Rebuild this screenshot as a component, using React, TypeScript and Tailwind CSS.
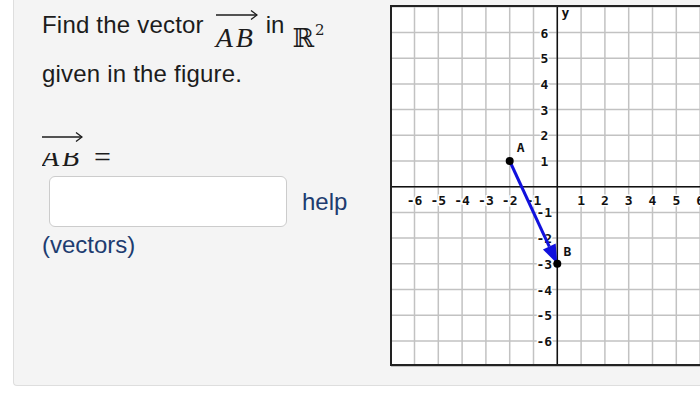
import React from "react";

const UX = 23.8;
const UY = 25.7;
const OX = 167.3;
const OY = 181.7;
const px = (x: number) => OX + x * UX;
const py = (y: number) => OY - y * UY;

function VecArrow({ width }: { width: number }) {
  return (
    <svg width={width} height={10} viewBox={`0 0 ${width} 10`} className="block">
      <line x1={0} y1={5} x2={width - 1} y2={5} stroke="#1c1c1c" strokeWidth={1.3} />
      <path d={`M${width - 7} 0.5 L${width - 1} 5 L${width - 7} 9.5`} fill="none" stroke="#1c1c1c" strokeWidth={1.3} />
    </svg>
  );
}

function Graph() {
  const ticks = [-6, -5, -4, -3, -2, -1, 1, 2, 3, 4, 5, 6];
  const A = { x: px(-2), y: py(1) };
  const B = { x: px(0), y: py(-3) };
  const dx = B.x - A.x;
  const dy = B.y - A.y;
  const len = Math.hypot(dx, dy);
  const ux = dx / len;
  const uy = dy / len;
  const hl = 19;
  const hw = 7;
  const bx = B.x - hl * ux;
  const by = B.y - hl * uy;
  const head = `${B.x},${B.y} ${bx + hw * uy},${by - hw * ux} ${bx - hw * uy},${by + hw * ux}`;
  const label = {
    fontFamily: '"DejaVu Sans Mono", monospace',
    fontWeight: 700,
    fontSize: 13,
  } as const;

  return (
    <svg width={312} height={362} viewBox="0 0 312 362" className="block">
      <rect x={1} y={1} width={340} height={359} fill="#ffffff" />
      {Array.from({ length: 15 }, (_, k) => k - 7).map((i) => (
        <line key={`v${i}`} x1={px(i)} y1={1} x2={px(i)} y2={360} stroke="#c2c2c2" strokeWidth={1.5} />
      ))}
      {Array.from({ length: 15 }, (_, k) => k - 7).map((j) => (
        <line key={`h${j}`} x1={1} y1={py(j)} x2={330} y2={py(j)} stroke="#c2c2c2" strokeWidth={1.5} />
      ))}
      <line x1={px(0)} y1={1} x2={px(0)} y2={360} stroke="#111" strokeWidth={1.5} />
      <line x1={1} y1={OY} x2={330} y2={OY} stroke="#111" strokeWidth={1.5} />
      <rect x={1} y={1} width={340} height={359} fill="none" stroke="#222" strokeWidth={2} />

      {ticks.map((i) => (
        <text key={`xl${i}`} x={px(i)} y={OY + 18.5} textAnchor="middle" fill="#111" stroke="#fff" strokeWidth={3} paintOrder="stroke" style={label}>
          {i < 0 ? `-${-i}` : i}
        </text>
      ))}
      {ticks.map((j) => (
        <text key={`yl${j}`} x={OX - 13} y={py(j) + 5} textAnchor="middle" fill="#111" stroke="#fff" strokeWidth={3} paintOrder="stroke" style={label}>
          {j < 0 ? `-${-j}` : j}
        </text>
      ))}
      <text x={OX + 8} y={12} textAnchor="middle" fill="#111" style={label}>y</text>

      <line x1={A.x} y1={A.y} x2={bx} y2={by} stroke="#1111dd" strokeWidth={3} />
      <polygon points={head} fill="#1111dd" />
      <circle cx={A.x} cy={A.y} r={4} fill="#000" />
      <circle cx={B.x} cy={B.y} r={4} fill="#000" />
      <text x={A.x + 11} y={A.y - 9} textAnchor="middle" fill="#111" style={label}>A</text>
      <text x={B.x + 10} y={B.y - 8} textAnchor="middle" fill="#111" style={label}>B</text>
    </svg>
  );
}

export default function App() {
  const sans = { fontFamily: '"Liberation Sans", Arial, sans-serif' };
  const serif = { fontFamily: '"Liberation Serif", "Times New Roman", serif' };

  return (
    <div className="w-[700px] h-[406px] bg-white overflow-hidden">
      <div className="ml-[13px] w-[700px] h-[386px] bg-[#f4f4f4] border-l border-b border-[#dedede] rounded-bl-[4px] flex">
        {/* Question text */}
        <div className="w-[376px] shrink-0 pl-[28px] pt-[8px] flex flex-col text-[24px] leading-[24px] text-[#1c1c1c]" style={sans}>
          <div className="flex items-start h-[52px]">
            <span className="mt-[5px] whitespace-nowrap tracking-[0.2px]">Find the vector</span>
            <span className="ml-[12px] w-[42px] flex flex-col">
              <span className="mt-[2px]"><VecArrow width={42} /></span>
              <span className="mt-[4px] italic text-[28px] leading-[28px] tracking-[3px]" style={serif}>AB</span>
            </span>
            <span className="mt-[5px] ml-[8px]">in</span>
            <span className="mt-[17px] ml-[8px] text-[26px] leading-[26px]" style={{ fontFamily: '"DejaVu Serif", serif' }}>ℝ</span>
            <span className="mt-[15px] ml-[1px] text-[15px] leading-[15px]" style={{ fontFamily: '"DejaVu Serif", serif' }}>2</span>
          </div>
          <div className="mt-[2px] whitespace-nowrap tracking-[0.2px]">given in the figure.</div>

          <div className="mt-[46px] w-[41px]"><VecArrow width={41} /></div>
          <div className="mt-[11px] h-[20px] flex items-start">
            <span className="h-[20px] overflow-hidden w-[45px]">
              <span className="block -mt-[10px] italic text-[28px] leading-[28px] tracking-[3px]" style={serif}>AB</span>
            </span>
            <span className="-mt-[10px] ml-[7px] text-[30px] leading-[28px]" style={serif}>=</span>
          </div>

          <div className="mt-[3px] flex items-center">
            <div className="ml-[7px] w-[238px] h-[51px] bg-white border border-[#cccccc] rounded-[6px]" />
            <span className="ml-[15px] text-[#1d3c70]">help</span>
          </div>
          <div className="mt-[6px] text-[#1d3c70]">(vectors)</div>
        </div>

        {/* Figure */}
        <div className="pt-[5px]">
          <Graph />
        </div>
      </div>
    </div>
  );
}
